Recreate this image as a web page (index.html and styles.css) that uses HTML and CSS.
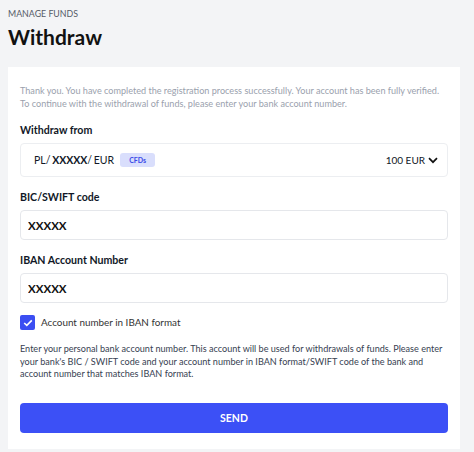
FILE: index.html
```html
<!DOCTYPE html>
<html lang="en">
<head>
    <meta charset="UTF-8">
    <meta name="viewport" content="width=device-width, initial-scale=1.0">
    <link rel="stylesheet" href="styles.css">
    <title>Withdraw</title>
</head>
<body>
    <div class="page-head">
        <div class="crumb">MANAGE FUNDS</div>
        <h1>Withdraw</h1>
    </div>

    <div class="card">
        <p class="intro">
            Thank you. You have completed the registration process successfully. Your account has been fully verified.<br>
            To continue with the withdrawal of funds, please enter your bank account number.
        </p>

        <label class="field-label">Withdraw from</label>
        <div class="select-box">
            <span class="account">PL/ <b>XXXXX</b>/ EUR</span>
            <span class="badge">CFDs</span>
            <span class="balance">100 EUR
                <svg width="10" height="7" viewBox="0 0 10 7"><path d="M1 1.2 L5 5.2 L9 1.2" fill="none" stroke="#111" stroke-width="1.7"/></svg>
            </span>
        </div>

        <label class="field-label" for="bic">BIC/SWIFT code</label>
        <input class="text-input" id="bic" type="text" value="XXXXX">

        <label class="field-label" for="iban">IBAN Account Number</label>
        <input class="text-input" id="iban" type="text" value="XXXXX">

        <label class="check-row">
            <span class="check-box">
                <svg width="10" height="8" viewBox="0 0 10 8"><path d="M1.2 4 L3.8 6.4 L8.8 1.4" fill="none" stroke="#fff" stroke-width="1.6"/></svg>
            </span>
            Account number in IBAN format
        </label>

        <p class="note">
            Enter your personal bank account number. This account will be used for withdrawals of funds. Please enter<br>
            your bank's BIC / SWIFT code and your account number in IBAN format/SWIFT code of the bank and<br>
            account number that matches IBAN format.
        </p>

        <button class="send-btn">SEND</button>
    </div>
</body>
</html>
```

FILE: styles.css
```css
body {
    margin: 0;
    background-color: #f3f4f6;
    font-family: Lato, "Noto Sans", sans-serif;
    color: #111827;
}

.page-head {
    padding: 8px 8px 0 8px;
    height: 59px;
}

.crumb {
    font-size: 8.8px;
    line-height: 11px;
    color: #555b66;
}

h1 {
    margin: 4px 0 0 0;
    font-size: 21px;
    line-height: 27px;
    font-weight: bold;
    color: #111;
}

.card {
    background-color: #fff;
    margin: 0 14px 0 8px;
    padding: 18px 12px 16px 12px;
}

/* both text blocks keep the line breaks of the copy */
.intro,
.note {
    white-space: nowrap;
    font-size: 9.1px;
    line-height: 12.5px;
}

.intro {
    margin: 0 0 13px 0;
    color: #9aa1ad;
}

.field-label {
    display: block;
    font-size: 10.6px;
    line-height: 14px;
    font-weight: bold;
    color: #111827;
    margin-bottom: 6px;
}

.select-box {
    display: flex;
    align-items: center;
    height: 32px;
    padding: 0 9px 0 13px;
    border: 1px solid #eceef1;
    border-radius: 4px;
    margin-bottom: 13px;
    font-size: 10.5px;
}

.account {
    word-spacing: -1px;
}

.account b {
    font-weight: bold;
}

.badge {
    margin-left: 6px;
    padding: 2px 9px;
    background-color: #d9defc;
    color: #3b4ce8;
    font-size: 7px;
    line-height: 10px;
    font-weight: bold;
    border-radius: 3px;
}

.balance {
    margin-left: auto;
    display: flex;
    align-items: center;
    gap: 3px;
    font-size: 10px;
}

.text-input {
    display: block;
    width: 100%;
    box-sizing: border-box;
    height: 30px;
    padding: 0 7px;
    border: 1px solid #e5e7eb;
    border-radius: 4px;
    font-family: inherit;
    font-size: 11.5px;
    font-weight: bold;
    color: #111;
    margin-bottom: 13px;
}

.check-row {
    display: flex;
    align-items: center;
    gap: 6px;
    margin-top: -1px;
    font-size: 9.9px;
    line-height: 15px;
    color: #333;
}

.check-box {
    width: 15px;
    height: 15px;
    background-color: #3b4ef2;
    border-radius: 2px;
    display: flex;
    align-items: center;
    justify-content: center;
}

.note {
    margin: 13px 0 22px 0;
    color: #374151;
}

.send-btn {
    display: block;
    width: 100%;
    height: 30px;
    border: none;
    border-radius: 4px;
    background-color: #3c50f6;
    color: #fff;
    font-family: inherit;
    font-size: 10.5px;
    font-weight: bold;
    cursor: pointer;
}
```
